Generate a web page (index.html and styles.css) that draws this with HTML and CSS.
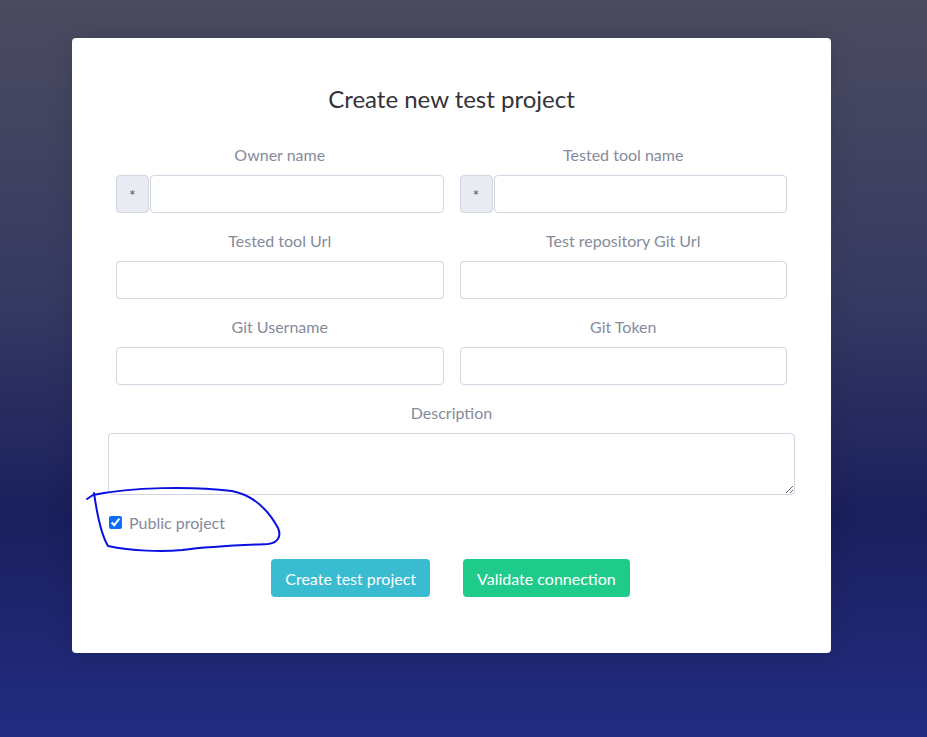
FILE: index.html
```html
<!DOCTYPE html>
<html lang="en">
<head>
<meta charset="utf-8">
<title>Create new test project</title>
<link rel="stylesheet" href="styles.css">
</head>
<body>
<div class="card">
  <h1 class="title">Create new test project</h1>
  <form class="form">
    <div class="row">
      <div class="col">
        <label class="label">Owner name</label>
        <div class="group"><span class="prefix">*</span><input class="input" type="text"></div>
      </div>
      <div class="col">
        <label class="label">Tested tool name</label>
        <div class="group"><span class="prefix">*</span><input class="input" type="text"></div>
      </div>
    </div>
    <div class="row">
      <div class="col">
        <label class="label">Tested tool Url</label>
        <input class="input" type="text">
      </div>
      <div class="col">
        <label class="label">Test repository Git Url</label>
        <input class="input" type="text">
      </div>
    </div>
    <div class="row">
      <div class="col">
        <label class="label">Git Username</label>
        <input class="input" type="text">
      </div>
      <div class="col">
        <label class="label">Git Token</label>
        <input class="input" type="password">
      </div>
    </div>
    <div class="desc">
      <label class="label">Description</label>
      <textarea class="textarea"></textarea>
    </div>
    <div class="check">
      <input type="checkbox" class="checkbox" checked>
      <span class="check-label">Public project</span>
    </div>
    <div class="actions">
      <button type="button" class="btn btn-info">Create test project</button>
      <button type="button" class="btn btn-success">Validate connection</button>
    </div>
  </form>
  <svg class="scribble" width="240" height="90" viewBox="0 0 240 90" aria-hidden="true">
    <path d="M15 34 L21 30 C 60 22, 120 21, 160 26 C 185 31, 199 50, 206 63 C 210 72, 205 78, 196 79 C 170 80, 140 81, 110 85 C 90 87, 60 86, 36 81 C 30 71, 26 56, 22 28" fill="none" stroke="#0a10e0" stroke-width="2" stroke-linecap="round" stroke-linejoin="round"/>
  </svg>
</div>
</body>
</html>
```
FILE: styles.css
```css
html, body {
  margin: 0;
  padding: 0;
}
body {
  width: 927px;
  height: 737px;
  overflow: hidden;
  background: linear-gradient(to bottom, #4b4b5f 0%, #363a62 40%, #1a1f5d 70%, #232d82 100%);
  font-family: "Lato", "Open Sans", sans-serif;
  padding-top: 38px;
  box-sizing: border-box;
}
.card {
  position: relative;
  margin-left: 72px;
  width: 759px;
  height: 615px;
  background: #fff;
  border-radius: 4px;
  box-shadow: 0 0 24px rgba(0, 0, 0, 0.12);
  box-sizing: border-box;
  padding: 46px 36px 0 36px;
}
.title {
  margin: 0;
  text-align: center;
  font-weight: 400;
  font-size: 24px;
  line-height: 29px;
  color: #333338;
}
.form {
  margin-top: 30px;
  display: flex;
  flex-direction: column;
}
.row {
  display: flex;
  margin-bottom: 16px;
}
.col {
  flex: 1;
  padding: 0 8px;
  display: flex;
  flex-direction: column;
}
.label {
  display: block;
  text-align: center;
  font-size: 16px;
  line-height: 24px;
  color: #868a9c;
  margin-bottom: 8px;
}
.group {
  display: flex;
}
.prefix {
  width: 31px;
  height: 36px;
  flex: none;
  background: #e9ebf3;
  border: 1px solid #d3d4e2;
  border-radius: 4px;
  color: #555;
  font-size: 16px;
  display: flex;
  align-items: center;
  justify-content: center;
  margin-right: 1px;
}
.input {
  width: 100%;
  height: 38px;
  flex: none;
  box-sizing: border-box;
  border: 1px solid #d3d4e2;
  border-radius: 4px;
  background: #fff;
  margin: 0;
  padding: 6px 12px;
  font: inherit;
}
.group .input {
  flex: 1 1 auto;
  width: auto;
  min-width: 0;
}
.desc {
  display: flex;
  flex-direction: column;
}
.textarea {
  height: 62px;
  flex: none;
  box-sizing: border-box;
  border: 1px solid #d3d4e2;
  border-radius: 4px;
  margin: 0;
  padding: 6px 12px;
  font: inherit;
  resize: both;
}
.check {
  display: flex;
  align-items: center;
  height: 24px;
  margin-top: 15px;
}
.checkbox {
  margin: 0 7px 0 1px;
  width: 13px;
  height: 13px;
  accent-color: #0d6efd;
}
.check-label {
  font-size: 16px;
  color: #868a9c;
}
.actions {
  display: flex;
  justify-content: center;
  gap: 33px;
  margin-top: 25px;
  padding-right: 2px;
}
.btn {
  height: 38px;
  border: none;
  border-radius: 4px;
  padding: 0 14px;
  font: inherit;
  font-size: 16px;
  color: #fff;
  cursor: pointer;
}
.btn-info {
  background: #39bbd0;
}
.btn-success {
  background: #1fcb8b;
}
.scribble {
  position: absolute;
  left: 0;
  top: 427px;
  overflow: visible;
}
```
